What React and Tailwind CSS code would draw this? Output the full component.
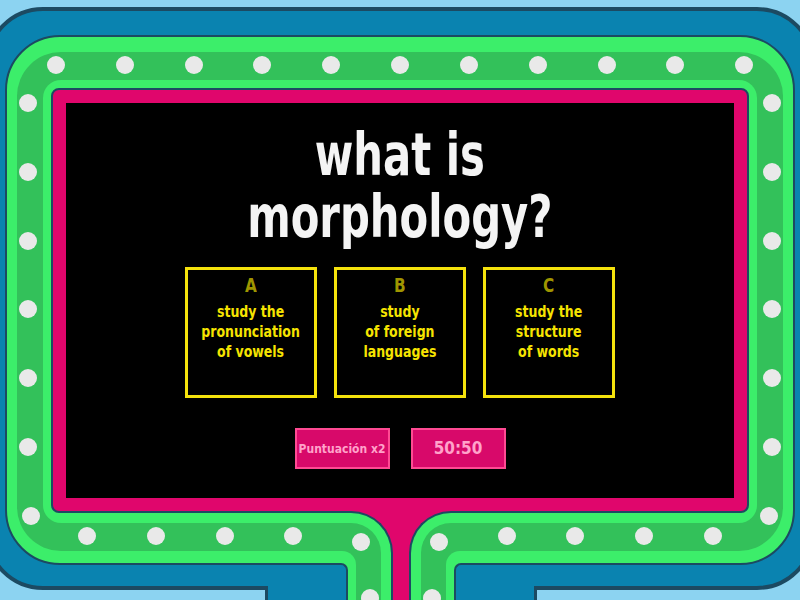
import React from "react";

const NAVY = "border-[#1c4a62]";

const dots = [
  // top row
  [56, 65], [125, 65], [194, 65], [262, 65], [331, 65], [400, 65], [469, 65], [538, 65], [607, 65], [675, 65], [744, 65],
  // left column
  [28, 103], [28, 172], [28, 241], [28, 309], [28, 378], [28, 447], [31, 516],
  // right column
  [772, 103], [772, 172], [772, 241], [772, 309], [772, 378], [772, 447], [769, 516],
  // bottom row
  [87, 536], [156, 536], [225, 536], [293, 536], [361, 542],
  [439, 542], [507, 536], [575, 536], [644, 536], [713, 536],
  // stem
  [370, 598], [432, 598],
];

const answers = [
  { letter: "A", lines: ["study the", "pronunciation", "of vowels"] },
  { letter: "B", lines: ["study", "of foreign", "languages"] },
  { letter: "C", lines: ["study the", "structure", "of words"] },
];

const AnswerBox = ({ letter, lines }) => (
  <div className="w-[132px] h-[131px] border-[3px] border-[#f5e20c] flex flex-col items-center pt-[3px]">
    <span className="text-[20px] leading-[24px] font-bold text-[#9f9500] mb-[5px] scale-x-[0.85]">{letter}</span>
    <div className="flex flex-col items-center scale-x-[0.87]">
      {lines.map((l) => (
        <span key={l} className="text-[16px] leading-[20px] font-bold text-[#f6e400] whitespace-nowrap">
          {l}
        </span>
      ))}
    </div>
  </div>
);

export default function App() {
  return (
    <div className="relative w-[800px] h-[600px] overflow-hidden bg-[#8cd3f1] pt-[7px] font-['DejaVu_Sans_Condensed','Liberation_Sans',sans-serif]">
      {/* frame */}
      <div className={`-ml-[15px] w-[830px] h-[583px] rounded-[58px] border-4 ${NAVY} bg-[#0a83b0] pl-[16px] pt-[24px]`}>
        <div className={`w-[790px] h-[530px] rounded-[55px] border-2 ${NAVY} bg-[#3cee6a] pt-[15px] pb-[12px] px-[10px]`}>
          <div className="h-full rounded-[44px] bg-[#33c15a] py-[28px] px-[26px]">
            <div className="h-full rounded-[18px] bg-[#3cee6a] pt-[8px] pb-[10px] px-[8px]">
              <div className={`h-full rounded-[8px] border-2 ${NAVY} bg-[#e0066c] p-[13px]`}>
                <div className="h-full bg-black flex flex-col items-center pt-[21px]">
                  <h1 className="text-[58px] leading-[62px] font-bold text-[#f4f4f4] text-center scale-x-[0.8] whitespace-nowrap">
                    what is
                    <br />
                    morphology?
                  </h1>

                  <div className="mt-[19px] flex gap-[17px]">
                    {answers.map((a) => (
                      <AnswerBox key={a.letter} {...a} />
                    ))}
                  </div>

                  <div className="mt-[30px] flex gap-[21px]">
                    <button className="w-[95px] h-[41px] border-2 border-[#ff4a93] bg-[#d8096a] text-[12px] font-bold text-[#ffa3ca]">
                      Puntuación x2
                    </button>
                    <button className="w-[95px] h-[41px] border-2 border-[#ff4a93] bg-[#d8096a] text-[17px] font-bold text-[#ffa3ca]">
                      50:50
                    </button>
                  </div>
                </div>
              </div>
            </div>
          </div>
        </div>
      </div>

      {/* stem */}
      <div className={`absolute left-[265px] top-[586px] w-[272px] h-[30px] bg-[#0a83b0] border-x-[3px] ${NAVY}`} />
      <div className="absolute left-[350px] top-[500px] w-[102px] h-[110px] bg-[#e0066c]" />

      <div className={`absolute left-[268px] top-[511px] w-[125px] h-[100px] bg-[#3cee6a] border-t-2 border-r-2 ${NAVY} rounded-tr-[42px] pt-[10px] pr-[10px]`}>
        <div className="h-full bg-[#33c15a] rounded-tr-[30px] pt-[28px] pr-[25px]">
          <div className="h-full bg-[#3cee6a] rounded-tr-[14px] pt-[12px] pr-[8px]">
            <div className={`h-full bg-[#0a83b0] border-t-2 border-r-2 ${NAVY} rounded-tr-[7px]`} />
          </div>
        </div>
      </div>
      <div className={`absolute left-[409px] top-[511px] w-[125px] h-[100px] bg-[#3cee6a] border-t-2 border-l-2 ${NAVY} rounded-tl-[42px] pt-[10px] pl-[10px]`}>
        <div className="h-full bg-[#33c15a] rounded-tl-[30px] pt-[28px] pl-[25px]">
          <div className="h-full bg-[#3cee6a] rounded-tl-[14px] pt-[12px] pl-[8px]">
            <div className={`h-full bg-[#0a83b0] border-t-2 border-l-2 ${NAVY} rounded-tl-[7px]`} />
          </div>
        </div>
      </div>

      {/* bulbs */}
      {dots.map(([x, y], i) => (
        <span
          key={i}
          className="absolute w-[18px] h-[18px] -ml-[9px] -mt-[9px] rounded-full bg-[#e9e9e9]"
          style={{ left: x, top: y }}
        />
      ))}
    </div>
  );
}
